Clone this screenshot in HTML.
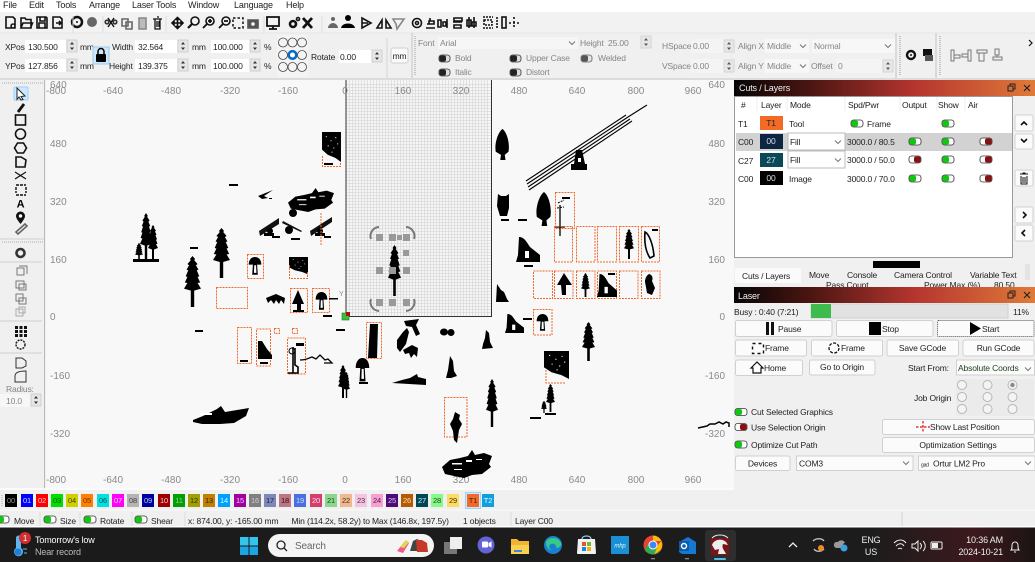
<!DOCTYPE html>
<html><head><meta charset="utf-8"><style>
html,body{margin:0;padding:0;width:1035px;height:562px;overflow:hidden;background:#f0f0f0}
svg{display:block;font-family:"Liberation Sans",sans-serif;font-size:8.500px;letter-spacing:-.15px;fill:#222}
.g{fill:#858585}.r{fill:#8a8a8a;font-size:10px;letter-spacing:0}
.m{text-anchor:middle}.e{text-anchor:end}
.w{fill:#fff}
.o{fill:none;stroke:#f0682a;stroke-width:1;stroke-dasharray:2 1}
.ic{fill:none;stroke:#111;stroke-width:1.600}
.t{fill:#fff}
</style></head><body>
<svg width="1035" height="562" viewBox="0 0 1035 562">
<defs>
<symbol id="tree" viewBox="0 0 20 100" preserveAspectRatio="none"><path fill="#000" d="M10 0L13 6 12 8 16 16 14 18 17 27 15 28 18 40 16 41 19 52 16 53 20 64 12 68V100H8V68L0 64 4 53 1 52 4 41 2 40 5 28 3 27 6 18 4 16 8 8 7 6Z"/></symbol>
<symbol id="mush" viewBox="0 0 20 30" preserveAspectRatio="none"><path fill="#000" d="M1 12C1 3 6 0 10 0 15 0 19 4 19 12L13 12 14 28 6 28 7 12Z"/><path fill="#fff" d="M9 13h2.500l.5 12H8.500z"/></symbol>
<symbol id="slope" viewBox="0 0 24 25" preserveAspectRatio="none"><path fill="#000" d="M3 0C8 0 10 4 14 10L24 18V25H0L2 18Z"/><path fill="#fff" d="M9 14h4v7H9z"/></symbol>
<symbol id="blob" viewBox="0 0 20 30" preserveAspectRatio="none"><path fill="#000" d="M10 0C16 3 20 14 18 22L13 25 14 30H7L8 25 1 22C-1 14 4 3 10 0Z"/></symbol>
<symbol id="hatch" viewBox="0 0 20 30" preserveAspectRatio="none"><path fill="#000" d="M0 0H20V29L14 25 6 22 0 17Z"/><path fill="#fff" d="M4 4h1v1H4zM9 8h1v1H9zM14 5h1v1h-1zM6 13h1v1H6zM12 15h1v1h-1zM16 11h1v1h-1zM10 19h1v1h-1z"/></symbol>
<symbol id="mtn" viewBox="0 0 50 28" preserveAspectRatio="none"><path fill="#000" d="M0 17L8 10 18 8 26 6 30 0 33 5 42 3 50 6 47 14 49 17 40 24 30 25 22 28 12 26 3 24Z"/><path fill="#fff" d="M10 13h10v1.500H10zM24 10h6v2h-6zM12 19h8v1H12zM34 9h6v1h-6z"/></symbol>
<g id="on"><rect width="12" height="7" rx="2.500" fill="#fff" stroke="#333" stroke-width=".8"/><rect x=".5" y=".5" width="6.500" height="6" rx="2" fill="#10c810"/></g>
<g id="off"><rect width="12" height="7" rx="2.500" fill="#fff" stroke="#333" stroke-width=".8"/><rect x="5" y=".5" width="6.500" height="6" rx="2" fill="#8c0f0f"/></g>
<g id="blk"><rect width="11" height="7" rx="2.500" fill="#ddd" stroke="#333" stroke-width=".8"/><rect x=".5" y=".5" width="6.500" height="6" rx="2" fill="#222"/></g>
<g id="spin"><rect x="-5" y="-6" width="10" height="12" fill="#e6e6e6" stroke="#cfcfcf"/><path d="M-2 -1.500L0-4 2-1.500ZM-2 1.500L0 4 2 1.500Z" fill="#333"/></g>
<path id="chev" d="M-3-1.500L0 1.500 3-1.500" fill="none" stroke="#777"/>
<path id="rot" d="M-8 4A9 9 0 0 1 0-8" fill="none" stroke="#777" stroke-width="2"/>
</defs>

<rect width="1035" height="562" fill="#f0f0f0"/>
<!-- menu -->
<rect width="1035" height="12" fill="#fff"/>
<g font-size="9">
<text x="3" y="8">File</text><text x="29" y="8">Edit</text><text x="56" y="8">Tools</text><text x="89" y="8">Arrange</text><text x="132" y="8">Laser Tools</text><text x="188" y="8">Window</text><text x="234" y="8">Language</text><text x="286" y="8">Help</text>
</g>
<!-- toolbar 1 -->
<rect y="12" width="1035" height="21" fill="#f2f2f2"/>
<g class="ic">
<path d="M6 17h7l2 2v9H6zM13 24a2 2 0 1 0 .1 0"/>
<path d="M21 28V18h4l1 1.500h5V28zM21 28l2-5h9.500l-2 5z"/>
<path d="M37 17h9l1 1v10H37zM40 17v4h5v-4M39 28v-5h6v5"/>
<path d="M53 17h7l2 2v9h-9zM56 23h5M59 21l2 2-2 2"/>
<circle cx="77" cy="22" r="5" stroke-width="2.500"/>
<path d="M108 27l6-9M114 27l-6-9" stroke-width="1.400"/><circle cx="107" cy="22" r="1.800" stroke="#333"/><circle cx="115" cy="22" r="1.800" stroke="#333"/>
<path d="M122 19h6v7h-6zM126 22h6v7h-6z" stroke="#666"/>
<path d="M139 18h7v11h-7z" stroke="#888" fill="#bbb"/>
<path d="M153 19h9M155 19v10h5V19M157 17h2M157 21v6M159 21v6" stroke-width="1.300"/>
<path d="M172 23h11M177.500 17.500v11M172 23l2-2v4zM183 23l-2-2v4zM177.500 17.500l-2 2h4zM177.500 28.500l-2-2h4z"/>
<circle cx="195" cy="21" r="4"/><path d="M192 24l-4 4" stroke-width="2.200"/>
<circle cx="210" cy="21" r="4"/><path d="M207 24l-4 4M208 21h4M210 19v4" stroke-width="1.800"/>
<circle cx="226" cy="21" r="4"/><path d="M223 24l-4 4M224 21h4" stroke-width="1.800"/>
<rect x="233" y="18" width="10" height="10" stroke-dasharray="2.500 2" stroke-width="1.500"/>
<path d="M248 20h10v8h-10z" stroke="#555" fill="#555"/>
<path d="M267 17h12v9h-12zM273 26v3M269 29h8" stroke-width="1.800"/>
<circle cx="293" cy="24" r="3" stroke-width="2.600"/><circle cx="298" cy="19" r="1.500"/>
<path d="M303 18l9 10M312 18l-9 10" stroke-width="2.800"/>
</g>
<circle cx="92" cy="22" r="5" fill="#666"/><circle cx="253" cy="24" r="1.800" fill="#fff"/><circle cx="77" cy="22" r="1" fill="#111"/>
<g fill="#000">
<circle cx="348" cy="18" r="3"/><path d="M341 28c1-6 13-6 14 0z"/>
<path fill="#666" d="M328 28c0-3 3-5 5-5s5 2 5 5zM331 19a2 2 0 1 0 4 0 2 2 0 1 0-4 0z"/>
</g>
<g class="ic" stroke-width="1.300">
<path d="M362 18l9 5-9 5zM362 23h6"/>
<path d="M377 28h5v-8zM391 28h-5v-8z"/>
<path d="M393 19l11 0-7 10-1-5z" stroke="#888"/>
<circle cx="417" cy="23" r="4.500"/><circle cx="417" cy="23" r="1.500"/>
<path d="M426 28h9M427 24h7v-3h-5v3zM430 18v3"/>
<path d="M438 20h3v7h-3zM443 22h3v4h-3zM447 19v9"/>
<path d="M453 22h9M454 18h8v3h-8zM454 25h7v3h-7z"/>
<path d="M469 17v11M474 17v11M467 20h4v6h-4zM472 22h4v4h-4z"/>
<path d="M483 17h10M483 28h10M484 20h8v5h-8z" stroke-dasharray="2 1"/>
<path d="M497 17v11" stroke-dasharray="2 1"/><rect x="502" y="17" width="4" height="11"/>
<path d="M514 17v11M509 23h10" stroke-dasharray="2 2" stroke-width="1.600"/>
</g>
<path d="M73 16v18M103 16v18M166 16v18M264 16v18M322 16v18" stroke="#ddd"/>
<!-- toolbar 2 -->
<rect y="33" width="1035" height="46" fill="#f0f0f0"/>
<path d="M0 33H1035" stroke="#e6e6e6"/><path d="M0 79H1035" stroke="#c9c9c9"/>
<text x="5" y="50">XPos</text><text x="5" y="69">YPos</text>
<rect x="25" y="40" width="41" height="13" class="w"/><rect x="25" y="59" width="41" height="13" class="w"/>
<text x="28" y="50">130.500</text><text x="28" y="69">127.856</text>
<use href="#spin" x="72" y="46"/><use href="#spin" x="72" y="65"/>
<text x="80" y="50">mm</text><text x="80" y="69">mm</text>
<rect x="93" y="47" width="16" height="17" fill="#cfe6fa" stroke="#9cc8ee"/>
<rect x="96" y="54" width="10" height="8" rx="1" fill="#000"/><path d="M98 54v-2.500a3 3 0 0 1 6 0V54" fill="none" stroke="#000" stroke-width="1.500"/>
<text x="112" y="50">Width</text><text x="109" y="69">Height</text>
<rect x="135" y="40" width="42" height="13" class="w"/><rect x="135" y="59" width="42" height="13" class="w"/>
<text x="138" y="50">32.564</text><text x="138" y="69">139.375</text>
<use href="#spin" x="183" y="46"/><use href="#spin" x="183" y="65"/>
<text x="192" y="50">mm</text><text x="192" y="69">mm</text>
<rect x="211" y="40" width="39" height="13" class="w"/><rect x="211" y="59" width="39" height="13" class="w"/>
<text x="213" y="50">100.000</text><text x="213" y="69">100.000</text>
<use href="#spin" x="255" y="46"/><use href="#spin" x="255" y="65"/>
<text x="264" y="50">%</text><text x="264" y="69">%</text>
<rect x="277" y="35" width="31" height="42" fill="#f4f4f4"/>
<g fill="none" stroke="#444" stroke-width=".8">
<circle cx="283" cy="42.500" r="4.500"/><circle cx="292.500" cy="42.500" r="4.500"/><circle cx="302" cy="42.500" r="4.500"/>
<circle cx="283" cy="55" r="4.500"/><circle cx="302" cy="55" r="4.500"/>
<circle cx="283" cy="67" r="4.500"/><circle cx="292.500" cy="67" r="4.500"/><circle cx="302" cy="67" r="4.500"/>
</g>
<circle cx="292.500" cy="55" r="3.800" fill="#fff" stroke="#0b6bc4" stroke-width="2.600"/>
<text x="311" y="60">Rotate</text>
<rect x="339" y="50" width="33" height="13" class="w"/><text x="340" y="60">0.00</text>
<use href="#spin" x="377" y="56"/>
<path d="M387 38V78" stroke="#d4d4d4"/>
<rect x="391" y="48" width="17" height="15" rx="2" fill="#fafafa" stroke="#cfcfcf"/><text x="399.500" y="59" class="m">mm</text>
<path d="M412 33V78M896 33V78M936 33V78" stroke="#c4c4c4"/>
<path d="M415 36V76M900 36V76M940 36V76" stroke="#999" stroke-dasharray="1 1"/>
<!-- font panel -->
<rect x="438" y="37" width="140" height="12" fill="#f6f6f6"/>
<rect x="691" y="39" width="33" height="14" fill="#f4f4f4"/><rect x="691" y="59" width="33" height="14" fill="#f4f4f4"/>
<rect x="765" y="39" width="44" height="14" fill="#f7f7f7"/><rect x="765" y="59" width="44" height="14" fill="#f7f7f7"/>
<rect x="812" y="39" width="83" height="14" fill="#f7f7f7"/><rect x="836" y="59" width="46" height="14" fill="#f4f4f4"/>
<g class="g">
<text x="418" y="46">Font</text><text x="440" y="46">Arial</text>
<text x="580" y="46">Height</text><text x="608" y="46">25.00</text>
<text x="455" y="61">Bold</text><text x="455" y="75">Italic</text>
<text x="526" y="61">Upper Case</text><text x="526" y="75">Distort</text>
<text x="598" y="61">Welded</text>
<text x="662" y="49">HSpace</text><text x="693" y="49">0.00</text>
<text x="662" y="69">VSpace</text><text x="693" y="69">0.00</text>
<text x="738" y="49">Align X</text><text x="738" y="69">Align Y</text>
<text x="767" y="49">Middle</text><text x="767" y="69">Middle</text>
<text x="814" y="49">Normal</text>
<text x="811" y="69">Offset</text><text x="838" y="69">0</text>
</g>
<use href="#chev" x="572" y="43"/>
<use href="#spin" x="646" y="42" opacity=".8"/>
<use href="#blk" x="439" y="55"/><use href="#blk" x="439" y="69"/><use href="#blk" x="510" y="55"/><use href="#blk" x="510" y="69"/><use href="#blk" x="581" y="55" opacity=".75"/>
<use href="#spin" x="729" y="46" opacity=".8"/><use href="#spin" x="729" y="66" opacity=".8"/>
<use href="#chev" x="803" y="46"/><use href="#chev" x="803" y="66"/>
<use href="#chev" x="888" y="46"/>
<use href="#spin" x="888" y="66" opacity=".8"/>
<!-- right-side toolbar icons -->
<circle cx="911" cy="55" r="4" fill="none" stroke="#111" stroke-width="2.400"/><circle cx="911" cy="55" r="1" fill="#111"/>
<rect x="923" y="49" width="9" height="7" fill="#111"/><rect x="925" y="55" width="8" height="6" fill="#555"/>
<g fill="none" stroke="#777">
<path d="M951 50h3v11h-3zM954 55h6v3h-6zM962 54h6v3h-6zM968 50h3v11h-3z"/>
<path d="M977 50h10v3h-10zM979 53h5v8h-5z"/>
<path d="M995 49h4v6h-4zM997 55v2M993 57h9v3h-9z"/>
</g>
<path d="M1029 40l3 3-3 3" fill="none" stroke="#111" stroke-width="1.200"/>

<!-- left toolbar -->
<rect x="0" y="80" width="44" height="410" fill="#f0f0f0"/><path d="M44.500 80V490" stroke="#b9b9b9"/>
<path d="M2 83H44M2 242H44" stroke="#aaa" stroke-dasharray="1 1"/>
<path d="M0 239H44M0 262H42M0 321H42M0 353H42" stroke="#cfcfcf"/>
<rect x="14" y="87" width="14" height="13" rx="1" fill="#cde8ff" stroke="#99d1ff"/>
<path d="M17 88l8 8-4 .5 2 3-2 .5-2-3-2 2.500z" fill="#fff" stroke="#222"/>
<g class="ic">
<path d="M18 112l6-8" stroke-width="2.800"/>
<rect x="15.500" y="115" width="10" height="10" stroke-width="1.600"/>
<circle cx="20.500" cy="134" r="5"/>
<path d="M17.500 143h6l3 5-3 5h-6l-3-5z"/>
<path d="M16 157h5l5 3-1 7h-9z"/>
<path d="M15 172l11 7M26 172l-11 7" stroke-width="1.200"/>
<path d="M16 185h10M16 195h10M16 187v6M26 187v6" stroke-dasharray="3 1" stroke-width="1.400"/>
<path d="M16 232l9-8 2 2-9 8z" stroke="#666"/>
</g>
<text x="20.500" y="207.500" class="m" font-size="11" font-weight="bold" fill="#000">A</text>
<path d="M20.500 224c-3-4-4.500-6-4.500-8a4.500 4.500 0 0 1 9 0c0 2-1.500 4-4.500 8z" fill="#111"/><circle cx="20.500" cy="216" r="1.700" fill="#fff"/>
<circle cx="20.500" cy="253" r="4" fill="none" stroke="#333" stroke-width="2.600"/>
<g fill="none" stroke="#777">
<path d="M17 268h7v7h-7zM19 266h8v8"/><path d="M16 281h8v7h-8zM19 284h7v6h-7z"/>
<path d="M16 294h7v7h-7zM19 298h7v6h-7z"/><path d="M16 309h7v7h-7zM19 307h6v6h-6z" stroke="#aaa"/>
</g>
<path fill="#111" d="M15 326h3v3h-3zM19.500 326h3v3h-3zM24 326h3v3h-3zM15 330h3v3h-3zM19.500 330h3v3h-3zM24 330h3v3h-3zM15 334h3v3h-3zM19.500 334h3v3h-3zM24 334h3v3h-3z"/>
<circle cx="20.500" cy="344.500" r="4.500" fill="none" stroke="#222" stroke-width="1.500" stroke-dasharray="2 1"/>
<path d="M16 358h6l4 3v5l-4 2h-6zM15 382V376c0-3 3-5 11-5v11z" fill="none" stroke="#333"/>
<text x="6" y="392" class="g">Radius:</text>
<rect x="0" y="394" width="30" height="13" fill="#f7f7f7"/><text x="6" y="404" class="g">10.0</text>
<use href="#spin" x="36" y="400"/>

<!-- canvas -->
<rect x="46" y="80" width="688" height="408" fill="#f8f8f8"/>
<rect x="346" y="80" width="145" height="236" fill="#f6f6f6"/>
<path stroke="#dadada" stroke-width=".8" d="M349.500 80V316M352.500 80V316M355.500 80V316M358.500 80V316M361.500 80V316M364.500 80V316M367.500 80V316M370.500 80V316M373.500 80V316M376.500 80V316M379.500 80V316M382.500 80V316M385.500 80V316M388.500 80V316M391.500 80V316M394.500 80V316M397.500 80V316M400.500 80V316M403.500 80V316M406.500 80V316M409.500 80V316M412.500 80V316M415.500 80V316M418.500 80V316M421.500 80V316M424.500 80V316M427.500 80V316M430.500 80V316M433.500 80V316M436.500 80V316M439.500 80V316M442.500 80V316M445.500 80V316M448.500 80V316M451.500 80V316M454.500 80V316M457.500 80V316M460.500 80V316M463.500 80V316M466.500 80V316M469.500 80V316M472.500 80V316M475.500 80V316M478.500 80V316M481.500 80V316M484.500 80V316M487.500 80V316"/>
<path stroke="#dadada" stroke-width=".8" d="M346 84.500H491M346 87.500H491M346 90.500H491M346 93.500H491M346 96.500H491M346 99.500H491M346 102.500H491M346 105.500H491M346 108.500H491M346 111.500H491M346 114.500H491M346 117.500H491M346 120.500H491M346 123.500H491M346 126.500H491M346 129.500H491M346 132.500H491M346 135.500H491M346 138.500H491M346 141.500H491M346 144.500H491M346 147.500H491M346 150.500H491M346 153.500H491M346 156.500H491M346 159.500H491M346 162.500H491M346 165.500H491M346 168.500H491M346 171.500H491M346 174.500H491M346 177.500H491M346 180.500H491M346 183.500H491M346 186.500H491M346 189.500H491M346 192.500H491M346 195.500H491M346 198.500H491M346 201.500H491M346 204.500H491M346 207.500H491M346 210.500H491M346 213.500H491M346 216.500H491M346 219.500H491M346 222.500H491M346 225.500H491M346 228.500H491M346 231.500H491M346 234.500H491M346 237.500H491M346 240.500H491M346 243.500H491M346 246.500H491M346 249.500H491M346 252.500H491M346 255.500H491M346 258.500H491M346 261.500H491M346 264.500H491M346 267.500H491M346 270.500H491M346 273.500H491M346 276.500H491M346 279.500H491M346 282.500H491M346 285.500H491M346 288.500H491M346 291.500H491M346 294.500H491M346 297.500H491M346 300.500H491M346 303.500H491M346 306.500H491M346 309.500H491M346 312.500H491"/>
<path d="M346 80V316.500H491.500V80" fill="none" stroke="#333"/>
<!-- rulers -->
<g class="r m">
<text x="56" y="94">-800</text><text x="113" y="94">-640</text><text x="171" y="94">-480</text><text x="230" y="94">-320</text><text x="288" y="94">-160</text><text x="345" y="94">0</text><text x="403" y="94">160</text><text x="461" y="94">320</text><text x="519" y="94">480</text><text x="577" y="94">640</text><text x="636" y="94">800</text><text x="693" y="94">960</text>
<text x="56" y="483">-800</text><text x="113" y="483">-640</text><text x="171" y="483">-480</text><text x="230" y="483">-320</text><text x="288" y="483">-160</text><text x="345" y="483">0</text><text x="403" y="483">160</text><text x="461" y="483">320</text><text x="519" y="483">480</text><text x="577" y="483">640</text><text x="636" y="483">800</text><text x="693" y="483">960</text>
</g>
<g class="r">
<text x="50" y="88">640</text><text x="50" y="147">480</text><text x="50" y="205">320</text><text x="50" y="263">160</text><text x="50" y="320">0</text><text x="50" y="379">-160</text><text x="50" y="437">-320</text>
</g>
<g class="r e">
<text x="725" y="88">640</text><text x="725" y="147">480</text><text x="725" y="205">320</text><text x="725" y="263">160</text><text x="725" y="320">0</text><text x="725" y="379">-160</text><text x="725" y="437">-320</text>
</g>
<!-- shapes left -->
<use href="#tree" x="140" y="213" width="12" height="48"/><use href="#tree" x="148" y="225" width="10" height="36"/><use href="#tree" x="135" y="243" width="8" height="18"/>
<rect x="133" y="259" width="26" height="3" fill="#000"/>
<use href="#tree" x="213" y="228" width="17" height="50"/><use href="#tree" x="184" y="256" width="17" height="51"/>
<path d="M229 184h9v2h-9zM190 247h8v2h-8zM195 330h8v2h-8zM272 236h8v2h-8zM291 238h9v2h-9zM324 236h7v2h-7z" fill="#000"/>
<path d="M258 196l15-6-9 6 4 2-6 1zM269 198h3v1h-3z" fill="#000"/>
<use href="#mtn" x="288" y="188" width="46" height="24"/>
<path d="M259 231l20-13v6l-19 12zM310 231l22-14v5l-21 14zM283 221l19 10-1 1-19-9z" fill="#111"/>
<circle cx="270" cy="231" r="3" fill="#000"/><circle cx="289" cy="230" r="4" fill="#000"/><circle cx="320" cy="231" r="3" fill="#000"/><circle cx="293" cy="213" r="4" fill="#000"/>
<path d="M264 233h10v3h-10zM315 233h10v3h-10z" fill="#000"/><path d="M321 213v33" class="o"/>
<rect x="247.500" y="254.500" width="16" height="24" class="o"/><use href="#mush" x="248" y="257" width="14" height="19"/>
<use href="#hatch" x="322" y="132" width="19" height="31"/><path d="M322.500 156v10.500H340.500v-4" class="o"/><rect x="324" y="163" width="9" height="2" fill="#000"/>
<use href="#hatch" x="289" y="257" width="19" height="18"/><path d="M289.500 265v13.500H307.500V272" class="o"/>
<rect x="216.500" y="287.500" width="31" height="21" class="o"/>
<rect x="290.500" y="288.500" width="17" height="24" class="o"/>
<path d="M298 290l6 14h-3v6h3v2h-11v-2h4v-6h-5z" fill="#000"/>
<rect x="312.500" y="288.500" width="17" height="24" class="o"/><use href="#mush" x="315" y="292" width="13" height="19"/>
<path d="M329 298h9v1.500h-9zM323 315h9v2h-9zM336 329h9v2h-9z" fill="#000"/>
<path d="M266 298l10-4 9 4-1 6-3-4-2 4-3-4-2 4-3-4-3 3z" fill="#000"/>
<text x="339" y="296" class="g" font-size="7">Y</text>
<rect x="237.500" y="327.500" width="14" height="36" class="o"/><rect x="256.500" y="329" width="14" height="37" class="o"/><rect x="287.500" y="338" width="18" height="36" class="o"/>
<rect x="274.500" y="328.500" width="5" height="5" class="o"/><rect x="292.500" y="328.500" width="5" height="5" class="o"/>
<path d="M240 360h8v2h-8zM260 362h8v2h-8zM296 343h8v3h-8z" fill="#000"/>
<path d="M258 341h4l5 8 5 6v4h-14z" fill="#000"/>
<path d="M293 347v26M288 373h10v-6l-3-2v-17" fill="none" stroke="#000" stroke-width="1.600"/><circle cx="292" cy="351" r="3" fill="none" stroke="#000"/>
<path d="M300 360c8 0 8-2 12-3l4 2 4-4 5 5 3-1 4 4h-8" fill="none" stroke="#000" stroke-width="1.300"/>
<path d="M193 420l10-4 8-4 6-3 4-3 4 6 12-2 12-2-3 8-12 7-14 1-18 0-9-2z" fill="#000"/>
<path d="M200 413h12v2h-12z" fill="#fff"/>
<!-- right shapes -->
<use href="#tree" x="388" y="245" width="13" height="51"/>
<g fill="#999"><rect x="376" y="234" width="7" height="7"/><rect x="389" y="234" width="7" height="7"/><rect x="397" y="235" width="5" height="5"/><rect x="403" y="234" width="7" height="7"/><rect x="403" y="250" width="6" height="6"/><rect x="376" y="267" width="7" height="7"/><rect x="389" y="267" width="7" height="7"/><rect x="403" y="267" width="7" height="7"/><rect x="376" y="299" width="7" height="7"/><rect x="389" y="299" width="7" height="7"/><rect x="403" y="299" width="7" height="7"/></g>
<use href="#rot" x="379" y="235"/><use href="#rot" transform="translate(406 235) scale(-1 1)"/><use href="#rot" transform="translate(379 303) scale(1 -1)"/><use href="#rot" transform="translate(406 303) scale(-1 -1)"/>
<rect x="342" y="313" width="7" height="7" fill="#3bbf3b" stroke="#1a7a1a" stroke-width=".6"/><rect x="346" y="312" width="4" height="4" fill="#a11"/>
<use href="#blob" x="495" y="129" width="15" height="31"/>
<path d="M526 181L626 115M527 184L628 117M528 187L630 119M529 190L632 121M628 117L647 105" stroke="#000" stroke-width="1.100"/>
<path d="M576 150h6l3 14h2v6h-16v-6h3z" fill="#000"/><path d="M578 158h3v4h-3z" fill="#fff"/>
<path d="M498 194l3 2h5l3-2v14l-2 8h-7l-3-10z" fill="#000"/><path d="M501 219h8v2h-8zM518 219h9v2h-9zM524 265h9v2h-9zM523 318h9v2h-9z" fill="#000"/>
<use href="#blob" x="536" y="192" width="16" height="34"/>
<rect x="555.500" y="192.500" width="19" height="36" class="o"/>
<path d="M560 205v31M555 227h10" stroke="#000" stroke-width="1.300"/><path d="M558 203l6-3M557 208l7-1" stroke="#000" stroke-dasharray="2 1"/><path d="M562 197h8v2h-8z" fill="#000"/>
<rect x="554.500" y="226.500" width="18" height="35.500" class="o"/><rect x="576.500" y="226.500" width="18.500" height="35.500" class="o"/><rect x="597.500" y="226.500" width="19" height="35.500" class="o"/><rect x="619.500" y="226.500" width="19" height="35.500" class="o"/><rect x="641.500" y="226.500" width="18" height="35.500" class="o"/>
<use href="#tree" x="624" y="229" width="10" height="30"/>
<path d="M645 232c4 2 8 12 9 24l-4 2c-4-6-6-14-5-26z" fill="none" stroke="#000" stroke-width="1.600"/><path d="M652 229h6v2h-6z" fill="#000"/>
<use href="#slope" x="516" y="237" width="24" height="25"/>
<rect x="533.500" y="271" width="19" height="27.500" class="o"/><rect x="554.500" y="271" width="18.500" height="27.500" class="o"/><rect x="576.500" y="271" width="18.500" height="27.500" class="o"/><rect x="597.500" y="271" width="19" height="27.500" class="o"/><rect x="619.500" y="271" width="18.500" height="27.500" class="o"/><rect x="641.500" y="271" width="18.500" height="27.500" class="o"/>
<path d="M564 273l8 12h-6v10h-4l-1-10h-4z" fill="#000"/><use href="#tree" x="581" y="273" width="9" height="24"/>
<use href="#slope" x="597" y="274" width="20" height="23"/><path d="M608 273h7v2h-7z" fill="#000"/>
<path d="M649 274c4 1 4 5 3 7l3 7-3 7-5-2-1-6-1-5c0-4 2-7 4-8z" fill="#000"/>
<path d="M497 284l4 6 3 2 3 7 2 3h-13z" fill="#000"/>
<rect x="533.500" y="309.500" width="18.500" height="25.500" class="o"/><use href="#mush" x="536" y="314" width="13" height="18"/>
<use href="#slope" x="505" y="314" width="19" height="19"/>
<path d="M370 324h8l-1 34h-9z" fill="#000"/><rect x="366.500" y="322.500" width="15" height="36" class="o"/>
<path d="M397 340l6-8 4-4 2 4-3 12-6 8-3-4zM404 321l15-2-3 6 4 9-4 2-4-9-6-1z" fill="#000"/>
<path d="M403 350l9-5 6 3-1 9-3-3-3 4-2-5-4 1z" fill="#000"/>
<ellipse cx="444" cy="332" rx="4" ry="3.500" fill="#000"/><ellipse cx="451" cy="332.500" rx="3.500" ry="3.500" fill="#000"/>
<path d="M486 330l3 3 1 9 3 6-11 1 1-5 2-6z" fill="#000"/>
<use href="#tree" x="582" y="322" width="13" height="39"/>
<use href="#hatch" x="544" y="351" width="25" height="29"/><path d="M546 370v13H565" class="o"/>
<use href="#mush" x="355" y="358" width="15" height="25"/><path d="M359 382h9v2h-9zM530 417h11v2h-11z" fill="#000"/>
<use href="#tree" x="338" y="365" width="10" height="33"/><use href="#tree" x="343" y="372" width="7" height="26"/>
<path d="M392 383l10-3 8-2 7-4 1 3 8 2v6z" fill="#000"/>
<path d="M450 356l3 5 1 10 3 5-6 2h-5l2-8z" fill="#000"/>
<use href="#tree" x="486" y="379" width="12" height="48"/>
<use href="#tree" x="546" y="384" width="9" height="28"/><use href="#tree" x="541" y="401" width="6" height="12"/><rect x="545" y="413" width="11" height="2" fill="#000"/>
<rect x="444.500" y="397.500" width="22.500" height="39.500" class="o"/>
<path d="M455 412l5 3-1 4 3 5-3 6-2 13-3-3-1-9-3-7 3-5z" fill="#000"/>
<use href="#mtn" x="442" y="450" width="50" height="28"/>
<path d="M698 428l9-2 3-2h5l4-2 4 2 3-2 3 1v4" fill="none" stroke="#000" stroke-width="1.500"/>

<!-- palette -->
<rect y="488" width="734" height="2" fill="#fff" opacity=".7"/>
<path d="M2 495V507" stroke="#aaa" stroke-dasharray="1 1"/>
<g font-size="7.500" text-anchor="middle">
<rect x="5" y="494" width="12" height="13" fill="#000"/><text x="11" y="503" fill="#999">00</text>
<rect x="21" y="494" width="12" height="13" fill="#0000ff"/><text x="27" y="503" fill="#cde">01</text>
<rect x="36" y="494" width="12" height="13" fill="#ff0000"/><text x="42" y="503" fill="#fcc">02</text>
<rect x="51" y="494" width="12" height="13" fill="#00e000"/><text x="57" y="503" fill="#050">03</text>
<rect x="66" y="494" width="12" height="13" fill="#d0d000"/><text x="72" y="503" fill="#440">04</text>
<rect x="81" y="494" width="12" height="13" fill="#ff8000"/><text x="87" y="503" fill="#630">05</text>
<rect x="97" y="494" width="12" height="13" fill="#00e0e0"/><text x="103" y="503" fill="#055">06</text>
<rect x="112" y="494" width="12" height="13" fill="#ff00ff"/><text x="118" y="503" fill="#fde">07</text>
<rect x="127" y="494" width="12" height="13" fill="#b4b4b4"/><text x="133" y="503" fill="#444">08</text>
<rect x="142" y="494" width="12" height="13" fill="#0000a0"/><text x="148" y="503" fill="#bcd">09</text>
<rect x="158" y="494" width="12" height="13" fill="#a00000"/><text x="164" y="503" fill="#ecc">10</text>
<rect x="173" y="494" width="12" height="13" fill="#00a000"/><text x="179" y="503" fill="#9c9">11</text>
<rect x="188" y="494" width="12" height="13" fill="#a0a000"/><text x="194" y="503" fill="#330">12</text>
<rect x="203" y="494" width="12" height="13" fill="#c08000"/><text x="209" y="503" fill="#320">13</text>
<rect x="218" y="494" width="12" height="13" fill="#00a0ff"/><text x="224" y="503" fill="#dff">14</text>
<rect x="234" y="494" width="12" height="13" fill="#a000a0"/><text x="240" y="503" fill="#ecf">15</text>
<rect x="249" y="494" width="12" height="13" fill="#808080"/><text x="255" y="503" fill="#ccc">16</text>
<rect x="264" y="494" width="12" height="13" fill="#7d87b9"/><text x="270" y="503" fill="#223">17</text>
<rect x="279" y="494" width="12" height="13" fill="#bb7784"/><text x="285" y="503" fill="#311">18</text>
<rect x="294" y="494" width="12" height="13" fill="#4a6fe3"/><text x="300" y="503" fill="#cde">19</text>
<rect x="310" y="494" width="12" height="13" fill="#d33f6a"/><text x="316" y="503" fill="#fde">20</text>
<rect x="325" y="494" width="12" height="13" fill="#8cd78c"/><text x="331" y="503" fill="#242">21</text>
<rect x="340" y="494" width="12" height="13" fill="#f0b98d"/><text x="346" y="503" fill="#432">22</text>
<rect x="355" y="494" width="12" height="13" fill="#f6c4e1"/><text x="361" y="503" fill="#434">23</text>
<rect x="371" y="494" width="12" height="13" fill="#fa9ed4"/><text x="377" y="503" fill="#424">24</text>
<rect x="386" y="494" width="12" height="13" fill="#500a78"/><text x="392" y="503" fill="#dcf">25</text>
<rect x="401" y="494" width="12" height="13" fill="#b45a00"/><text x="407" y="503" fill="#fdb">26</text>
<rect x="416" y="494" width="12" height="13" fill="#004754"/><text x="422" y="503" fill="#cef">27</text>
<rect x="431" y="494" width="12" height="13" fill="#86fa88"/><text x="437" y="503" fill="#242">28</text>
<rect x="447" y="494" width="12" height="13" fill="#ffdb66"/><text x="453" y="503" fill="#430">29</text>
<rect x="465.500" y="492.500" width="15" height="16" fill="#cde8ff" stroke="#99d1ff"/>
<rect x="467" y="494" width="12" height="13" fill="#f36926"/><text x="473" y="503" fill="#420">T1</text>
<rect x="482" y="494" width="12" height="13" fill="#0f9fe0"/><text x="488" y="503" fill="#dff">T2</text>
</g>
<!-- status -->
<path d="M0 510H1035" stroke="#fafafa"/>
<use href="#on" x="-3" y="516"/><text x="14" y="524">Move</text><path d="M40 512v14M80 512v14M132 512v14M185 512v14M511 512v14" stroke="#dcdcdc"/>
<use href="#on" x="44" y="516"/><text x="60" y="524">Size</text>
<use href="#on" x="84" y="516"/><text x="100" y="524">Rotate</text><use href="#on" x="135" y="516"/><text x="151" y="524">Shear</text>
<text x="188" y="524">x: 874.00, y: -165.00 mm</text><text x="291.500" y="524">Min (114.2x, 58.2y) to Max (146.8x, 197.5y)</text><text x="463" y="524">1 objects</text><text x="515" y="524">Layer C00</text>
<path d="M902 512v14" stroke="#d4d4d4"/>
<rect y="526" width="1035" height="1.500" fill="#fff"/>

<!-- cuts panel -->
<defs><linearGradient id="tb"><stop offset="0" stop-color="#050505"/><stop offset=".25" stop-color="#4a1512"/><stop offset=".6" stop-color="#b5352f"/><stop offset="1" stop-color="#e07a38"/></linearGradient>
<linearGradient id="tk"><stop offset="0" stop-color="#1b1b1b"/><stop offset=".84" stop-color="#1c1c1c"/><stop offset=".94" stop-color="#3c191d"/><stop offset="1" stop-color="#1d1414"/></linearGradient></defs>
<rect x="734" y="80" width="301" height="16" fill="url(#tb)"/>
<text x="739" y="91" fill="#eee" font-size="9">Cuts / Layers</text>
<path d="M1008 86h5v5h-5zM1010 86v-2h5v5h-2" fill="none" stroke="#222"/><path d="M1024 85l6 6M1030 85l-6 6" stroke="#222" stroke-width="1.200"/>
<rect x="734.500" y="96.500" width="278" height="161" fill="#fff" stroke="#9a9a9a"/>
<path d="M757 97v14M787 97v14M845 97v14M900 97v14M937 97v14M965 97v14" stroke="#eee"/>
<text x="741" y="108">#</text><text x="761" y="108">Layer</text><text x="790" y="108">Mode</text><text x="848" y="108">Spd/Pwr</text><text x="902" y="108">Output</text><text x="938" y="108">Show</text><text x="968" y="108">Air</text>
<text x="738" y="127">T1</text><rect x="760" y="116" width="23" height="14" fill="#f36926"/><text x="771" y="126" class="m">T1</text><text x="789" y="127">Tool</text>
<use href="#on" x="851" y="120"/><text x="867" y="127">Frame</text><use href="#on" x="942" y="120"/>
<rect x="736" y="133" width="276" height="18" fill="#d2d2d2"/>
<text x="738" y="145">C00</text><rect x="760" y="134" width="23" height="15" fill="#0d2540"/><text x="771" y="144" class="m" fill="#dde">00</text>
<rect x="788" y="133" width="57" height="17" fill="#fff" stroke="#bbb"/><text x="790" y="145">Fill</text><use href="#chev" x="838" y="142"/>
<text x="847" y="145">3000.0 / 80.5</text><use href="#on" x="909" y="138"/><use href="#on" x="942" y="138"/><use href="#off" x="980" y="138"/>
<text x="738" y="164">C27</text><rect x="760" y="153" width="23" height="14" fill="#0a4a58"/><text x="771" y="163" class="m" fill="#dde">27</text>
<rect x="788" y="151" width="57" height="17" fill="#fff" stroke="#bbb"/><text x="790" y="163">Fill</text><use href="#chev" x="838" y="160"/>
<text x="847" y="163">3000.0 / 50.0</text><use href="#off" x="909" y="156"/><use href="#on" x="942" y="156"/><use href="#off" x="980" y="156"/>
<text x="738" y="182">C00</text><rect x="760" y="171" width="23" height="14" fill="#000"/><text x="771" y="181" class="m" fill="#dde">00</text><text x="789" y="182">Image</text>
<text x="847" y="182">3000.0 / 70.0</text><use href="#on" x="909" y="175"/><use href="#on" x="942" y="175"/><use href="#off" x="980" y="175"/>
<g fill="#fbfbfb" stroke="#d2d2d2"><rect x="1015" y="115" width="18" height="16" rx="2"/><rect x="1015" y="134" width="18" height="15" rx="2"/><rect x="1015" y="170" width="18" height="16" rx="2"/><rect x="1015" y="207" width="18" height="16" rx="2"/><rect x="1015" y="225" width="18" height="16" rx="2"/></g>
<path d="M1021 125l3-3 3 3M1021 139l3 3 3-3M1023 212l3 3-3 3M1025 230l-3 3 3 3" fill="none" stroke="#111" stroke-width="1.600"/>
<path d="M1020 174h8M1021 176v8h6v-8M1023 177v6M1025 177v6M1022.500 173h3" fill="none" stroke="#111"/>
<!-- tabs -->
<rect x="735" y="260" width="278" height="8" fill="#f0f0f0"/><rect x="873" y="261" width="47" height="7" fill="#000"/>
<rect x="735" y="268" width="296" height="20" fill="#f0f0f0"/>
<rect x="735" y="268" width="66" height="15" fill="#fafafa"/>
<text x="742" y="279">Cuts / Layers</text><text x="809" y="278">Move</text><text x="847" y="278">Console</text><text x="894" y="278">Camera Control</text><text x="970" y="278">Variable Text</text>
<rect x="1025" y="264" width="5" height="16" fill="#e4e4e4"/>
<text x="826" y="288">Pass Count</text><text x="924" y="288">Power Max (%)</text><text x="994" y="288">80.50</text>
<!-- laser panel -->
<rect x="734" y="287" width="301" height="16" fill="url(#tb)"/><text x="738" y="299" fill="#eee" font-size="9">Laser</text>
<path d="M1008 293h5v5h-5zM1010 293v-2h5v5h-2" fill="none" stroke="#222"/><path d="M1024 292l6 6M1030 292l-6 6" stroke="#222" stroke-width="1.200"/>
<rect x="734" y="303" width="301" height="185" fill="#f0f0f0"/>
<text x="734" y="315">Busy : 0:40 (7:21)</text>
<rect x="811" y="304" width="197" height="14" fill="#e2e2e2" stroke="#d0d0d0"/><rect x="811" y="304" width="20" height="14" fill="#3dbb4d"/>
<text x="1013" y="315">11%</text>
<g fill="#fbfbfb" stroke="#d0d0d0">
<rect x="735.500" y="320.500" width="96.500" height="16" rx="2"/><rect x="836.500" y="320.500" width="96.500" height="16" rx="2"/>
<rect x="735.500" y="340" width="71" height="16" rx="2"/><rect x="811.500" y="340" width="71" height="16" rx="2"/><rect x="887" y="340" width="71.500" height="16" rx="2"/><rect x="963" y="340" width="71" height="16" rx="2"/>
<rect x="735.500" y="360" width="67" height="15.500" rx="2"/><rect x="809.500" y="360" width="65.500" height="15" rx="2"/>
<rect x="882.500" y="419.500" width="152" height="15" rx="2"/><rect x="882.500" y="437.500" width="152" height="15" rx="2"/>
<rect x="735.500" y="456" width="54.500" height="14.500" rx="2"/><rect x="796.500" y="456" width="116.500" height="14.500"/><rect x="918.500" y="456" width="116.500" height="14.500"/><rect x="956.500" y="360" width="78" height="15"/>
</g>
<rect x="937.500" y="320.500" width="96.500" height="16" rx="1" fill="#fbfbfb" stroke="#555" stroke-dasharray="1 1"/>
<path d="M766 322h3v13h-3zM771 322h3v13h-3z" fill="#111"/><text x="778" y="332">Pause</text>
<rect x="869" y="322" width="12" height="13" fill="#000"/><text x="882" y="332">Stop</text>
<path d="M970 322l11 6.500-11 6.500z" fill="#000"/><text x="982" y="332">Start</text>
<rect x="752.500" y="343.500" width="11" height="10" fill="none" stroke="#111" stroke-width="1.400" stroke-dasharray="3 3"/><text x="765" y="351">Frame</text>
<circle cx="834" cy="348" r="5" fill="none" stroke="#111" stroke-width="1.300" stroke-dasharray="3 1.500"/><text x="841" y="351">Frame</text>
<text x="922.500" y="351" class="m">Save GCode</text><text x="998.500" y="351" class="m">Run GCode</text>
<path d="M751 368l6-6 6 6h-2v5h-8v-5z" fill="#fff" stroke="#111" stroke-width="1.200"/><text x="764" y="371">Home</text>
<text x="842" y="370" class="m">Go to Origin</text><text x="908" y="371">Start From:</text><text x="958" y="371" fill="#1d3d1d">Absolute Coords</text><use href="#chev" x="1028" y="369"/>
<rect x="956" y="379" width="78" height="37" fill="#ebebeb"/>
<g fill="#f4f4f4" stroke="#b5b5b5"><circle cx="962" cy="385" r="4.500"/><circle cx="987.500" cy="385" r="4.500"/><circle cx="1012.500" cy="385" r="4.500"/><circle cx="962" cy="397" r="4.500"/><circle cx="987.500" cy="397" r="4.500"/><circle cx="1012.500" cy="397" r="4.500"/><circle cx="962" cy="409" r="4.500"/><circle cx="987.500" cy="409" r="4.500"/><circle cx="1012.500" cy="409" r="4.500"/></g>
<circle cx="1012.500" cy="385" r="2.200" fill="#888"/>
<text x="914" y="401">Job Origin</text>
<use href="#on" x="735" y="408.500"/><text x="751" y="415">Cut Selected Graphics</text>
<use href="#off" x="735" y="423.500"/><text x="751" y="430.500">Use Selection Origin</text>
<use href="#on" x="735" y="441"/><text x="751" y="448">Optimize Cut Path</text>
<path d="M916 427h14M923 421v12" stroke="#d11" stroke-width="1.200" stroke-dasharray="2.500 1.500"/><text x="930" y="430">Show Last Position</text>
<text x="958" y="448" class="m">Optimization Settings</text>
<text x="762.500" y="466.500" class="m">Devices</text><text x="799" y="466.500">COM3</text><use href="#chev" x="906" y="463"/>
<text x="921" y="466.500" font-size="5">gad</text><text x="933" y="466.500">Ortur LM2 Pro</text><use href="#chev" x="1028" y="463"/>

<!-- taskbar -->
<rect y="527.500" width="1035" height="34.500" fill="url(#tk)"/>
<path d="M16 538a2.500 2.500 0 0 1 5 0v10a4.500 4.500 0 1 1-5 0z" fill="#5fb5f0"/><circle cx="18" cy="552" r="3.500" fill="#1e7fd6"/>
<circle cx="25" cy="538" r="6" fill="#d32e2e"/><text x="25" y="541" class="m t" font-size="8">1</text>
<path d="M23 549h4M24 553h3" stroke="#5fb5f0"/>
<text x="35" y="543" class="t" font-size="9">Tomorrow's low</text><text x="35" y="555" fill="#bbb" font-size="9">Near record</text>
<g fill="#35c5ec"><rect x="240" y="537" width="8.500" height="8.500"/><rect x="249.500" y="537" width="8.500" height="8.500"/><rect x="240" y="546.500" width="8.500" height="8.500" fill="#1ba5e2"/><rect x="249.500" y="546.500" width="8.500" height="8.500" fill="#1ba5e2"/></g>
<rect x="268" y="534" width="166" height="23" rx="11.500" fill="#f4f4f4"/>
<circle cx="281" cy="545" r="4" fill="none" stroke="#222" stroke-width="1.300"/><path d="M284 548l3 3" stroke="#222" stroke-width="1.300"/>
<text x="295" y="549" fill="#666" font-size="10">Search</text>
<path d="M397 551l8-10 4 2-6 10z" fill="#ee5a8a"/><path d="M400 547l6-7 3 2-5 6z" fill="#e5d64a"/><path d="M410 551l3-10 4-2 4 2 1 10z" fill="#444"/><path d="M416 540l6 0 5 3 1 9h-11z" fill="#c33a2a"/>
<rect x="444" y="542" width="13" height="12" fill="#777"/><rect x="450" y="537" width="12" height="12" fill="#eee"/>
<circle cx="486" cy="545" r="8.500" fill="#6264d6"/><rect x="482" y="541.500" width="6" height="6" rx="1" fill="#fff"/><path d="M488.500 543l3-1.500v6l-3-1.500z" fill="#fff"/>
<path d="M511 539h6l2 2h10v13h-18z" fill="#f0b332"/><rect x="511" y="545" width="18" height="9" fill="#fad04f"/><rect x="514" y="550" width="8" height="2" fill="#3a8ad8"/>
<circle cx="553" cy="545" r="9" fill="#1b7fd1"/><path d="M546 542c2-5 12-6 15 1 1 3-2 5-5 5 1-3-2-5-5-4-3 1-2 6 1 6-3 1-6-3-6-8z" fill="#35c98a"/>
<path d="M578 539h17l1 14c0 1-1 1-1 1h-17c-1 0-1-1-1-1z" fill="#f2f2f2"/><path d="M582 539c0-4 9-4 9 0" fill="none" stroke="#9cd" stroke-width="1.200"/>
<rect x="582" y="542" width="4" height="4" fill="#e9522c"/><rect x="587" y="542" width="4" height="4" fill="#7cb82f"/><rect x="582" y="547" width="4" height="4" fill="#0c8ce8"/><rect x="587" y="547" width="4" height="4" fill="#f5b400"/>
<rect x="611" y="536" width="18" height="18" fill="#1a8fd3"/><text x="620" y="547.500" class="m" font-size="6" fill="#dff" font-style="italic">mhp</text>
<circle cx="653" cy="545" r="9.500" fill="#ea4335"/><path d="M653 545l8 4.500a9.500 9.500 0 0 1-16.300 .5l4-7z" fill="#34a853"/><path d="M653 535.500a9.500 9.500 0 0 1 8.500 5.500H653z" fill="#fbbc05"/><path d="M661.500 541a9.500 9.500 0 0 1-1 9l-6 4.500 3-9z" fill="#fbbc05"/><circle cx="653" cy="545" r="4.500" fill="#fff"/><circle cx="653" cy="545" r="3.500" fill="#4285f4"/>
<path d="M688 537l8 5v12h-14l-3-2v-10z" fill="#1478d4"/><rect x="679" y="541" width="10" height="10" fill="#0a5aaa"/><circle cx="684" cy="546" r="2.500" fill="none" stroke="#fff" stroke-width="1.400"/>
<rect x="705" y="530" width="31" height="31" rx="3" fill="#2e2e2e"/><rect x="711" y="538" width="18" height="17" fill="#7c1518"/><path d="M712 545c2-6 10-7 14-3l2 3-5-1c-2 4 2 7 3 10h-8l1-5-4 1z" fill="#eee"/><path d="M712 538c4-4 12-4 16 0" fill="none" stroke="#eee"/>
<rect x="714" y="558" width="12" height="2" rx="1" fill="#4fb8ec"/><rect x="651" y="558" width="4" height="1.300" fill="#888"/><rect x="685" y="558" width="4" height="1.300" fill="#888"/>
<path d="M789 547l4-4 4 4" fill="none" stroke="#eee" stroke-width="1.300"/>
<path d="M813 541c3-3 9-3 11 0M824 549c-3 3-8 3-10 0" fill="none" stroke="#ccc" stroke-width="1.300"/><circle cx="821" cy="548" r="3" fill="#f08a24"/>
<path d="M836 548a3 3 0 0 1 2-6 4 4 0 0 1 7 1h-1l-3 5z" fill="#999"/><circle cx="844" cy="548" r="3.500" fill="#3aa0e0"/>
<text x="871" y="543" class="m" fill="#eee" font-size="9">ENG</text><text x="871" y="555" class="m" fill="#eee" font-size="9">US</text>
<path d="M894 543c4-4 9-4 12 0M896 546c3-3 6-3 8 0M898 549c1-1 3-1 4 0" fill="none" stroke="#eee" stroke-width="1.100"/>
<path d="M912 544h3l3-3v10l-3-3h-3zM920 543c2 2 2 4 0 6M923 541c3 3 3 7 0 10" fill="none" stroke="#eee"/>
<rect x="931" y="542" width="11" height="7" rx="1" fill="none" stroke="#eee"/><rect x="932" y="543" width="6" height="5" fill="#eee"/>
<text x="1003" y="543" class="e" fill="#eee" font-size="9">10:36 AM</text><text x="1003" y="555" class="e" fill="#eee" font-size="9">2024-10-21</text>
<path d="M1011 550c1-1 1-2 1-5a3 3 0 0 1 6 0c0 3 0 4 1 5zM1014 552h2" fill="none" stroke="#eee"/>
</svg>
</body></html>
